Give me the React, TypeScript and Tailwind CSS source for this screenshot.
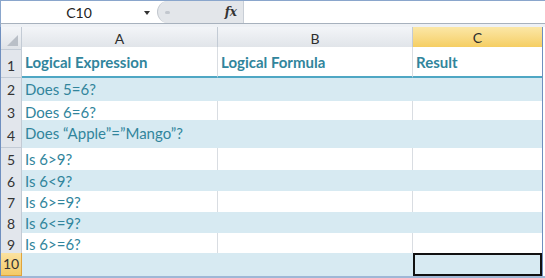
import React from 'react';

const rows = [
  { n: '1', text: 'Logical Expression', b: 'Logical Formula', c: 'Result', h: 'h-[31px]', head: true },
  { n: '2', text: 'Does 5=6?', h: 'h-[23px]', blue: true },
  { n: '3', text: 'Does 6=6?', h: 'h-[19px]' },
  { n: '4', text: 'Does “Apple”=”Mango”?', h: 'h-[28px]', blue: true, top: true },
  { n: '5', text: 'Is 6>9?', h: 'h-[22px]' },
  { n: '6', text: 'Is 6<9?', h: 'h-[21px]', blue: true },
  { n: '7', text: 'Is 6>=9?', h: 'h-[21px]' },
  { n: '8', text: 'Is 6<=9?', h: 'h-[21px]', blue: true },
  { n: '9', text: 'Is 6>=6?', h: 'h-[20px]' },
  { n: '10', text: '', h: 'h-[22px]', blue: true, sel: true },
];

const App: React.FC = () => {
  return (
    <div className="w-[545px] h-[278px] overflow-hidden bg-white font-['Lato',sans-serif]">
      {/* formula bar */}
      <div className="h-[24px] flex border-t border-l border-[#8aa6cc] border-b-[#a7b1bd] border-b bg-white">
        <div className="w-[156px] relative flex items-center justify-center text-[14px] text-[#222]">
          C10
          <span className="absolute left-[143px] top-[10px] w-0 h-0 border-l-[3px] border-r-[3px] border-t-[4px] border-l-transparent border-r-transparent border-t-[#333]" />
        </div>
        <div className="w-[86px] bg-[#e3e6ea] rounded-l-full flex items-center justify-end pr-[6px] border-l border-[#c3c8cf]">
          <span className="mr-auto ml-[7px] w-[5px] h-[3px] rounded-full bg-[#c2c7ce]" />
          <span className="font-['DejaVu_Serif',serif] italic font-bold text-[12px] text-[#333]">fx</span>
        </div>
        <div className="flex-1 border-l border-[#c8ced6]" />
      </div>
      <div className="h-[3px] bg-[#eef1f5] border-l border-[#8aa6cc]" />
      {/* sheet */}
      <div className="w-[543px] border-l border-r border-[#6f8fbf]">
        {/* column header */}
        <div className="grid grid-cols-[21px_196px_195px_129px] h-[20px] text-[14px] text-[#2d2d2d]">
          <div className="relative bg-gradient-to-b from-[#f3f5f8] to-[#dfe3e8] border-r border-b border-[#c3cbd5]">
            <span className="absolute right-[3px] bottom-[3px] w-0 h-0 border-l-[11px] border-t-[11px] border-l-transparent border-t-transparent border-b-0 border-r-0" style={{ borderBottom: '0' }} />
            <svg className="absolute right-[3px] bottom-[3px]" width="11" height="11"><polygon points="11,0 11,11 0,11" fill="#b9bfc7" /></svg>
          </div>
          <div className="bg-gradient-to-b from-[#f3f5f8] to-[#dfe3e8] border-r border-b border-[#c3cbd5] flex items-center justify-center">A</div>
          <div className="bg-gradient-to-b from-[#f3f5f8] to-[#dfe3e8] border-r border-b border-[#c3cbd5] flex items-center justify-center">B</div>
          <div className="bg-gradient-to-b from-[#fbe7a6] to-[#f5cd5e] border-b-2 border-[#e8a83a] flex items-center justify-center">C</div>
        </div>
        {rows.map(r => (
          <div
            key={r.n}
            className={`grid grid-cols-[21px_196px_195px_129px] ${r.h} text-[15px] text-[#31859c] ${r.head ? 'font-bold' : ''}`}
          >
            <div
              className={`flex items-end justify-center pb-[1px] text-[14px] font-normal text-[#333] border-r border-b ${r.sel ? 'bg-gradient-to-b from-[#fbe2a0] to-[#f4ca66] border-[#e0a43c]' : 'bg-[#e2e6ec] border-[#c3cbd5]'}`}
            >
              {r.n}
            </div>
            <div
              className={`flex ${r.top ? 'items-start pt-[2px]' : 'items-end pb-[1px]'} pl-[3px] whitespace-nowrap ${r.blue ? 'bg-[#d7eaf2]' : 'bg-white border-r border-[#d9dde2]'} ${r.head ? 'border-b-2 border-b-[#4fa7c4] pb-[3px]' : ''}`}
            >
              {r.text}
            </div>
            <div
              className={`flex items-end pb-[3px] pl-[3px] whitespace-nowrap ${r.blue ? 'bg-[#d7eaf2]' : 'bg-white border-r border-[#d9dde2]'} ${r.head ? 'border-b-2 border-b-[#4fa7c4]' : ''}`}
            >
              {r.b}
            </div>
            <div
              className={`flex items-end pb-[3px] pl-[3px] whitespace-nowrap ${r.blue ? 'bg-[#d7eaf2]' : 'bg-white'} ${r.head ? 'border-b-2 border-b-[#4fa7c4]' : ''} ${r.sel ? 'border-2 border-[#111]' : ''}`}
            >
              {r.c}
            </div>
          </div>
        ))}
        <div className="h-[1px] bg-[#3f6fb0]" />
      </div>
      <div className="h-[2px] bg-[#9fb7d6]" />
    </div>
  );
};

export default App;
